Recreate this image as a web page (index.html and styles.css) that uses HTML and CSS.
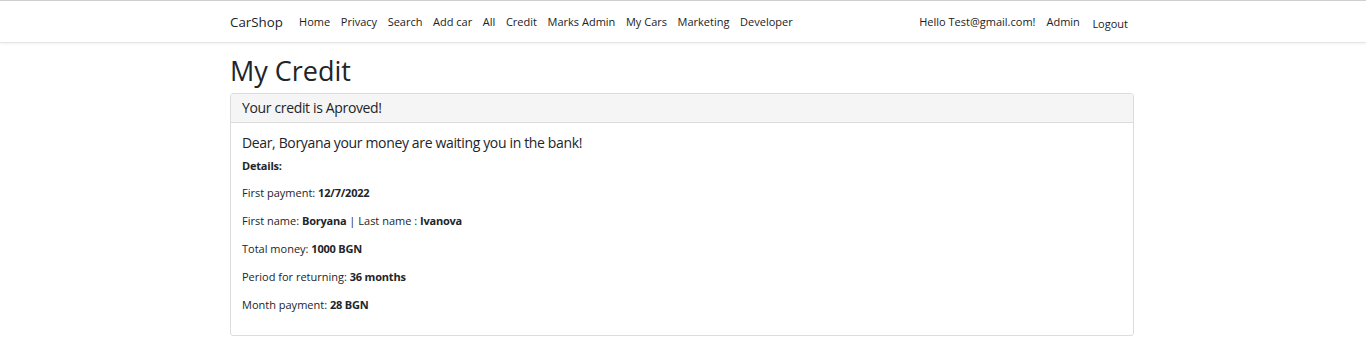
FILE: index.html
```html
<!DOCTYPE html>
<html lang="en">
<head>
  <meta charset="UTF-8">
  <meta name="viewport" content="width=device-width, initial-scale=1.0">
  <title>My Credit - CarShop</title>
  <link rel="stylesheet" href="styles.css">
</head>
<body>
  <header class="navbar">
    <div class="container nav-inner">
      <a class="brand" href="#">CarShop</a>
      <ul class="nav-links">
        <li><a href="#">Home</a></li>
        <li><a href="#">Privacy</a></li>
        <li><a href="#">Search</a></li>
        <li><a href="#">Add car</a></li>
        <li><a href="#">All</a></li>
        <li><a href="#">Credit</a></li>
        <li><a href="#">Marks Admin</a></li>
        <li><a href="#">My Cars</a></li>
        <li><a href="#">Marketing</a></li>
        <li><a href="#">Developer</a></li>
      </ul>
      <ul class="nav-user">
        <li><a href="#">Hello Test@gmail.com!</a></li>
        <li><a href="#">Admin</a></li>
        <li><button type="button" class="logout">Logout</button></li>
      </ul>
    </div>
  </header>

  <main class="container">
    <h1 class="title">My Credit</h1>
    <div class="card">
      <div class="card-header">Your credit is Aproved!</div>
      <div class="card-body">
        <p class="lead">Dear, Boryana your money are waiting you in the bank!</p>
        <p class="details"><b>Details:</b></p>
        <p>First payment: <b>12/7/2022</b></p>
        <p>First name: <b>Boryana</b> | Last name : <b>Ivanova</b></p>
        <p>Total money: <b>1000 BGN</b></p>
        <p>Period for returning: <b>36 months</b></p>
        <p>Month payment: <b>28 BGN</b></p>
      </div>
    </div>
  </main>
</body>
</html>
```

FILE: styles.css
```css
body {
  margin: 0;
  font-family: "Open Sans", "Noto Sans", sans-serif;
  color: #212529;
  background: #fff;
}
a {
  color: inherit;
  text-decoration: none;
}
.container {
  width: 904px;
  margin-left: calc(50% - 453px);
}

/* navbar */
.navbar {
  border-top: 1px solid #cfcfcf;
  border-bottom: 1px solid #e5e5e5;
  box-shadow: 0 1px 3px rgba(0,0,0,0.06);
  height: 41px;
}
.nav-inner {
  display: flex;
  align-items: center;
  height: 100%;
}
.brand {
  font-size: 13.3px;
  margin-right: 11px;
  color: #222;
}
.nav-links, .nav-user {
  list-style: none;
  margin: 0;
  padding: 0;
  display: flex;
  align-items: center;
}
.nav-links a, .nav-user a {
  display: block;
  font-size: 11px;
  padding: 0 5.5px;
  color: #222;
}
.nav-links a {
  padding: 0 5.3px;
}
.nav-user {
  margin-left: auto;
}
.logout {
  border: 0;
  background: none;
  font-family: inherit;
  font-size: 11px;
  color: #222;
  padding: 2px 6px 0 7px;
  cursor: pointer;
}

/* content */
.title {
  font-size: 27px;
  font-weight: 400;
  margin: 11px 0 5px;
  line-height: 34px;
}
.card {
  border: 1px solid #dcdcdc;
  border-radius: 3px;
}
.card-header {
  background: #f5f5f5;
  border-bottom: 1px solid #dcdcdc;
  padding: 6px 11px;
  font-size: 14px;
  line-height: 16px;
  letter-spacing: -0.35px;
}
.card-body {
  padding: 11px 11px 10px;
}
.card-body p {
  font-size: 11px;
  margin: 0 0 13px;
  line-height: 15px;
}
.card-body b {
  letter-spacing: -0.2px;
}
.card-body .lead {
  font-size: 14px;
  line-height: 18px;
  margin-bottom: 6px;
  letter-spacing: -0.35px;
}
.card-body .details {
  margin-bottom: 12px;
}
```
